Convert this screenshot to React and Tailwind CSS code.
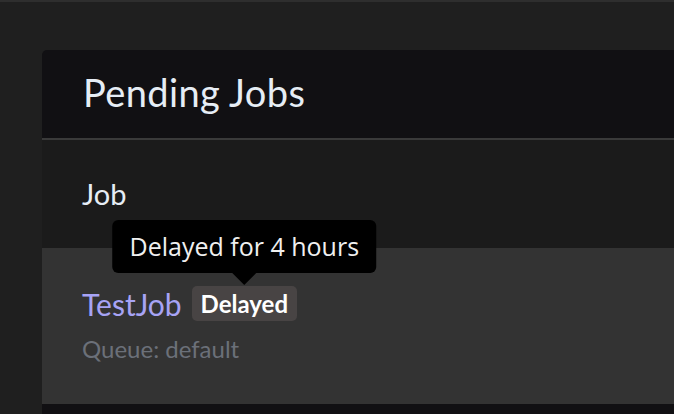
import React from 'react';

const nunito = { fontFamily: 'Lato, "Noto Sans", sans-serif' };

// ── Tooltip shown over the status badge ──────────────────────────────────────
function Tooltip({ text }) {
  return (
    <div className="absolute left-1/2 bottom-full mb-[13px] -translate-x-1/2 z-10">
      <div className="relative bg-black rounded-[6px] px-[17px] h-[53px] flex items-center whitespace-nowrap">
        <span className="text-[25px] text-[#f0f0f0] leading-none" style={{ fontFamily: '"Open Sans", sans-serif' }}>
          {text}
        </span>
        <span className="absolute left-1/2 -translate-x-1/2 top-full w-0 h-0 border-l-[12px] border-r-[12px] border-t-[12px] border-l-transparent border-r-transparent border-t-black" />
      </div>
    </div>
  );
}

function StatusBadge({ label, hint }) {
  return (
    <span className="relative inline-flex items-center h-[35px] px-[9px] rounded-[5px] bg-[#484444]">
      <span className="text-[24px] font-bold text-white leading-none">{label}</span>
      {hint && <Tooltip text={hint} />}
    </span>
  );
}

export default function App() {
  return (
    <div className="w-[674px] h-[414px] overflow-hidden bg-[#1f1f1f] border-t-2 border-[#2e2e2e] pt-[48px] pl-[42px]" style={nunito}>
      <div className="w-[700px] h-[400px] bg-[#111013] rounded-tl-[5px] overflow-hidden">
        {/* Header */}
        <div className="h-[90px] flex items-center px-[41px] pb-[4px] border-b-2 border-[#3a3a3a]">
          <h2 className="text-[38px] tracking-[0.01em] text-[#e6edf5] leading-none">Pending Jobs</h2>
        </div>

        {/* Table head */}
        <div className="h-[108px] bg-[#1b1b1b] px-[40px] pt-[39px]">
          <span className="text-[29px] text-[#e6edf5] leading-none">Job</span>
        </div>

        {/* Row */}
        <div className="h-[156px] bg-[#333333] px-[40px] pt-[38px]">
          <div className="flex items-center gap-[10px]">
            <span className="text-[30px] text-[#a7a3f5] leading-none">TestJob</span>
            <StatusBadge label="Delayed" hint="Delayed for 4 hours" />
          </div>
          <div className="mt-[16px] text-[24px] text-[#6b7079] leading-none">Queue: default</div>
        </div>
      </div>
    </div>
  );
}
